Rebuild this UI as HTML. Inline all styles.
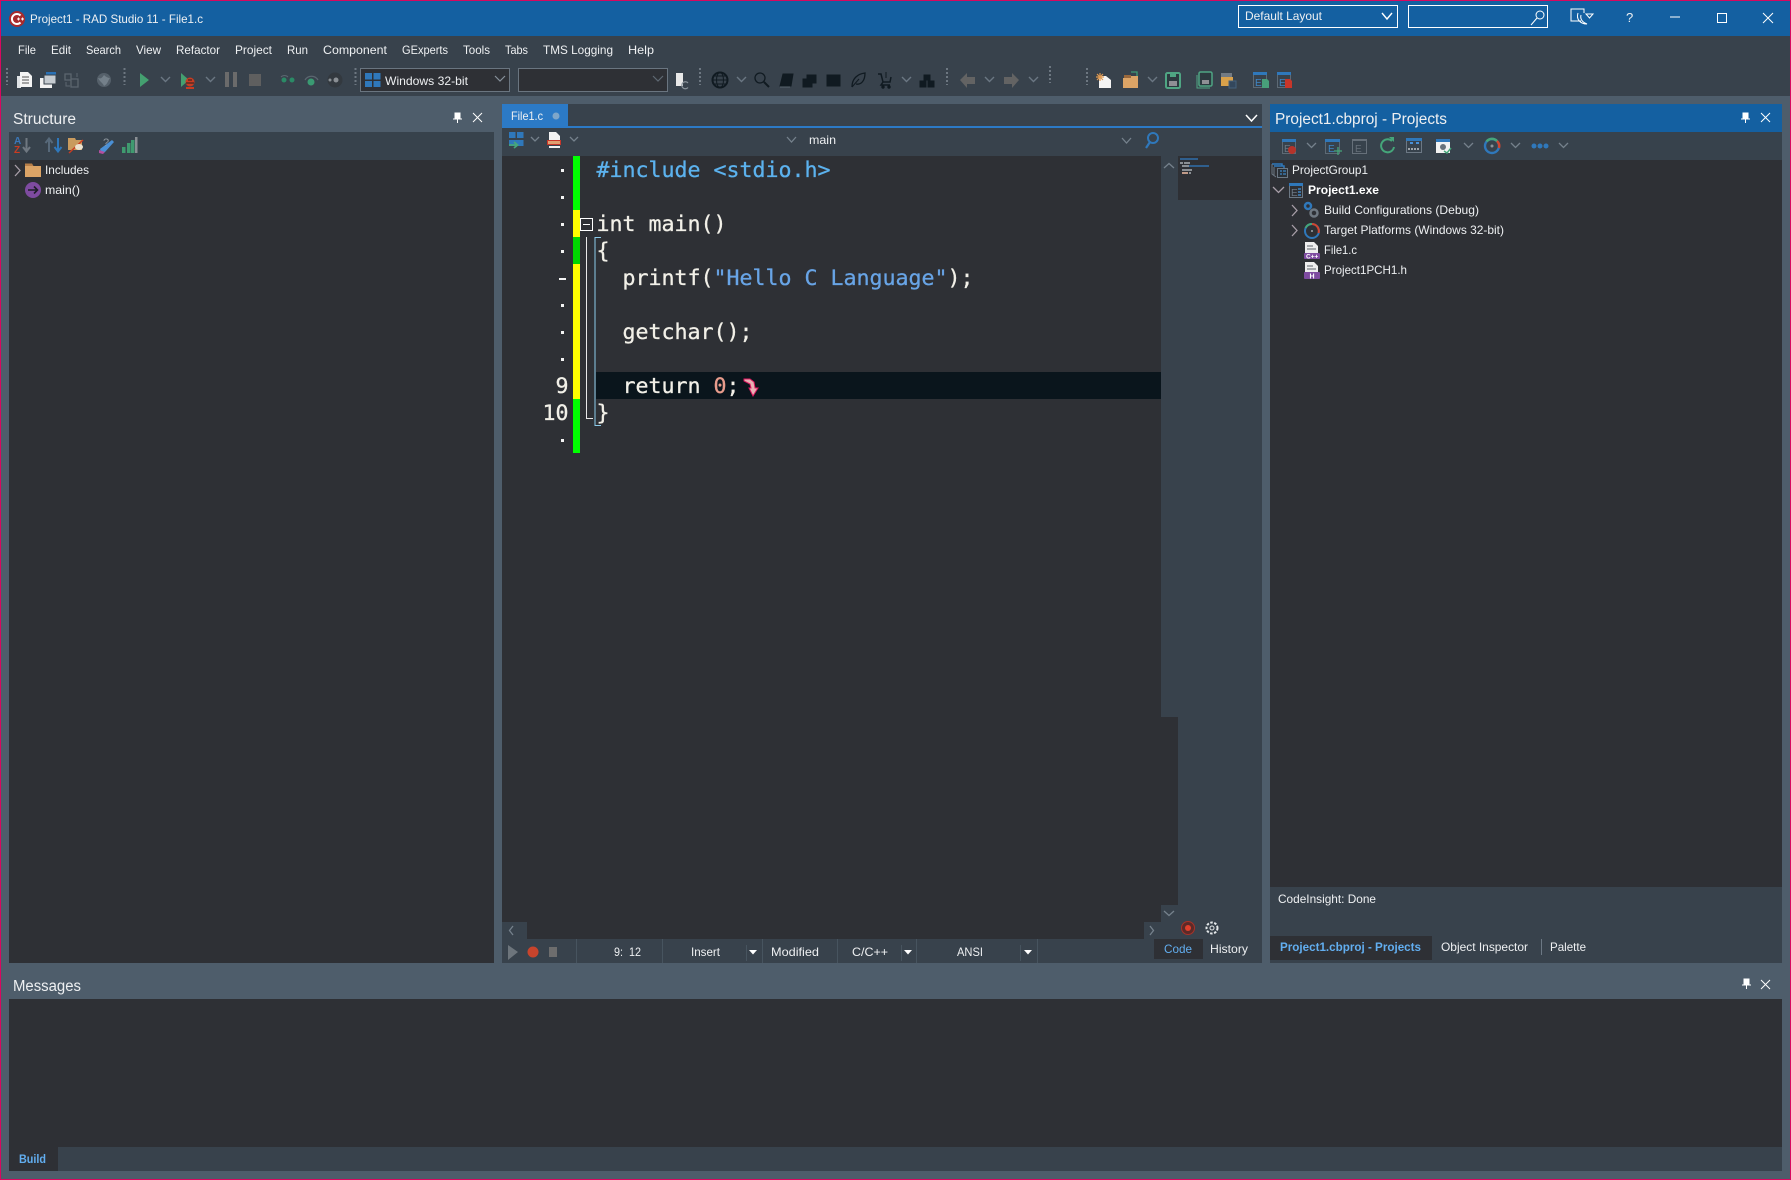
<!DOCTYPE html>
<html lang="en"><head><meta charset="utf-8"><title>Project1 - RAD Studio 11 - File1.c</title>
<style>
html,body{margin:0;padding:0;background:#4e5d6b;width:1791px;height:1180px;overflow:hidden}
svg{display:block}
text{font-family:"Liberation Sans",sans-serif;font-size:12px;fill:#eef0f2;white-space:pre}
.t{font-size:15.5px}
.c{font-family:"DejaVu Sans Mono","Liberation Mono",monospace;font-size:21.6px;fill:#f2f0e8;stroke:#f2f0e8;stroke-width:.3px}
.b{font-weight:bold}
</style></head><body>
<svg width="1791" height="1180" viewBox="0 0 1791 1180" xmlns="http://www.w3.org/2000/svg">
<!-- base -->
<rect width="1791" height="1180" fill="#4e5d6b"/>
<rect x="1" y="1" width="1789" height="35" fill="#1460a1"/>
<rect x="1" y="36" width="1789" height="60" fill="#38424c"/>
<!-- frame -->
<path d="M.5 1180V0M0 .5H1791M1790.5 0V1180M0 1179.5H1791" stroke="#d8085f" fill="none"/>

<!-- title bar -->
<circle cx="17" cy="19" r="8" fill="#a82a2c"/><path d="M20.500 15.500a5 5 0 1 0 0 7" fill="none" stroke="#fff" stroke-width="2"/><path d="M17 19h3M18.500 17.500v3M21 19h3M22.500 17.500v3" stroke="#fff" stroke-width=".9"/>
<text x="30" y="23" textLength="173" lengthAdjust="spacingAndGlyphs">Project1 - RAD Studio 11 - File1.c</text>
<rect x="1238.5" y="5.5" width="159" height="22" fill="none" stroke="#fff"/>
<text x="1245" y="20" textLength="77" lengthAdjust="spacingAndGlyphs">Default Layout</text>
<path d="M1382 13l5 6 5-6" fill="none" stroke="#fff" stroke-width="1.4"/>
<rect x="1408.5" y="5.5" width="139" height="22" fill="none" stroke="#fff"/>
<circle cx="1540" cy="15" r="4" fill="none" stroke="#fff"/><path d="M1537 18l-6 7" stroke="#fff"/>
<path d="M1581 21h-10v-12h13v4M1578 13c-2 6 2 11 9 11-5-2-7-5-6-9" fill="none" stroke="#fff"/><path d="M1586 14h7l-3.500 4z" fill="none" stroke="#fff"/>
<text x="1626" y="22" style="font-size:13px">?</text>
<path d="M1670 17h10" stroke="#fff"/>
<rect x="1717.5" y="13.500" width="9" height="9" fill="none" stroke="#fff"/>
<path d="M1763 13l10 10M1773 13l-10 10" stroke="#fff"/>

<!-- menu -->
<text x="18" y="54" textLength="18" lengthAdjust="spacingAndGlyphs">File</text>
<text x="51" y="54" textLength="20" lengthAdjust="spacingAndGlyphs">Edit</text>
<text x="86" y="54" textLength="35" lengthAdjust="spacingAndGlyphs">Search</text>
<text x="136" y="54" textLength="25" lengthAdjust="spacingAndGlyphs">View</text>
<text x="176" y="54" textLength="44" lengthAdjust="spacingAndGlyphs">Refactor</text>
<text x="235" y="54" textLength="37" lengthAdjust="spacingAndGlyphs">Project</text>
<text x="287" y="54" textLength="21" lengthAdjust="spacingAndGlyphs">Run</text>
<text x="323" y="54" textLength="64" lengthAdjust="spacingAndGlyphs">Component</text>
<text x="402" y="54" textLength="46" lengthAdjust="spacingAndGlyphs">GExperts</text>
<text x="463" y="54" textLength="27" lengthAdjust="spacingAndGlyphs">Tools</text>
<text x="505" y="54" textLength="23" lengthAdjust="spacingAndGlyphs">Tabs</text>
<text x="543" y="54" textLength="70" lengthAdjust="spacingAndGlyphs">TMS Logging</text>
<text x="628" y="54" textLength="26" lengthAdjust="spacingAndGlyphs">Help</text>

<!-- toolbar grips -->
<path d="M7 68v17M124.500 68v17M355.500 68v17M700 68v17M947 68v17M1050 66v17M1087 68v17" stroke="#6d7781" stroke-width="2" stroke-dasharray="2 2" fill="none"/>
<!-- toolbar chevrons -->
<path d="M161 77l4.500 4.500 4.500-4.500M206 77l4.500 4.500 4.500-4.500M737 77l4.500 4.500 4.500-4.500M902 77l4.500 4.500 4.500-4.500M985 77l4.500 4.500 4.500-4.500M1029 77l4.500 4.500 4.500-4.500M1148 77l4.500 4.500 4.500-4.500" fill="none" stroke="#6b7783" stroke-width="1.400"/>
<!-- new/open icons -->
<rect x="17" y="76" width="4" height="12" fill="#dfe3e6"/><path d="M20 72h8l4 4v11H20z" fill="#f4f4f4"/><path d="M22 77h7M22 80h7M22 83h7" stroke="#555"/>
<rect x="40" y="78" width="12" height="10" fill="#f2f2f2"/><rect x="46" y="72" width="10" height="3" fill="#2a71b5"/><rect x="44" y="75" width="12" height="9" fill="#c5cbd0" stroke="#38424c"/>
<path d="M65 74h6v6h-6zM71 79h7v8h-7z" fill="none" stroke="#5c666f" stroke-width="1.300"/><path d="M66 82v4h4M77 73v4" fill="none" stroke="#5c666f"/>
<circle cx="104" cy="80" r="7" fill="#55606a"/><path d="M98 78c3 1 4 0 6-3 2 2 4 3 6 3-2 2-2 6-6 8-1-3-4-4-6-8z" fill="#74808a"/>
<!-- run -->
<path d="M140 73l9 7-9 7z" fill="#44a070"/>
<path d="M181 73l8 7-8 7z" fill="#44a070"/><circle cx="190" cy="82" r="4.500" fill="#c93c22"/><path d="M186 87h8v2h-8z" fill="#c93c22"/><path d="M188 80h4M186 83h8" stroke="#222" stroke-width="1"/>
<rect x="225" y="72" width="4" height="15" fill="#6b6b6b"/><rect x="233" y="72" width="4" height="15" fill="#6b6b6b"/>
<rect x="249" y="74" width="12" height="12" fill="#5f5f5f"/>
<circle cx="284" cy="80" r="2.500" fill="#2b8a66"/><circle cx="292" cy="80" r="2.500" fill="#2b8a66"/><path d="M281 77c2-2 5-2 7 0" fill="none" stroke="#5b6670"/>
<circle cx="311" cy="82" r="3.500" fill="#3a9a72"/><path d="M305 80c3-5 10-5 13 0" fill="none" stroke="#5b6670" stroke-width="1.300"/>
<circle cx="335" cy="80" r="7.500" fill="#33393f"/><circle cx="336" cy="80" r="2.500" fill="#8a8f94"/><circle cx="330" cy="80" r="1.500" fill="#8a8f94"/>
<!-- platform combo -->
<rect x="360.500" y="68.500" width="149" height="23" fill="#2e3035" stroke="#6a7580"/>
<path d="M365 73h7v6.500h-7zM373.500 73h7v6.500h-7zM365 81h7v6h-7zM373.500 81h7v6h-7z" fill="#2f78bb"/>
<text x="385" y="85" textLength="83" lengthAdjust="spacingAndGlyphs">Windows 32-bit</text>
<path d="M495 76l5 5 5-5" fill="none" stroke="#87919b" stroke-width="1.200"/>
<rect x="518.500" y="68.500" width="149" height="23" fill="#2e3035" stroke="#6a7580"/>
<path d="M653 76l5 5 5-5" fill="none" stroke="#5f6973" stroke-width="1.200"/>
<path d="M676 73h7v13h-7z" fill="#e8e8e8"/><path d="M688 83a3.500 3.500 0 1 0 0 4.500" fill="none" stroke="#8a939b" stroke-width="1.200"/>
<!-- dark toolbar group -->
<g fill="#101a21" stroke="#101a21">
<circle cx="720" cy="80" r="7.500" fill="none" stroke-width="2"/><ellipse cx="720" cy="80" rx="3.500" ry="7.500" fill="none"/><path d="M712 80h16M713 76h14M713 84h14" fill="none"/>
<circle cx="760" cy="78" r="5" fill="none" stroke-width="1.300"/><path d="M764 82l5 5" fill="none" stroke-width="2"/>
<path d="M783 74h10l-2 12h-11z" stroke-width="1"/><path d="M780 87h10" stroke="#5a6670"/>
<path d="M807 75h9v8h-9zM803 79h9v8h-9z" stroke-width="1"/>
<path d="M827 75h13v11h-13z" stroke-width="1"/>
<path d="M852 87c0-8 5-13 13-14 0 8-4 12-9 11" fill="none" stroke-width="1.300"/><path d="M852 87l7-8" fill="none"/>
<path d="M878 74h3l2 8h7l1-5M883 82l-2 3h9" fill="none" stroke-width="1.500"/><circle cx="883" cy="87" r="1.200"/><circle cx="889" cy="87" r="1.200"/><path d="M886 72v6" fill="none"/>
<path d="M924 75h6v5h-6zM920 81h6v6h-6zM928 81h6v6h-6z" stroke-width="1"/>
</g>
<!-- nav -->
<path d="M960 80l7-7v4h8v7h-8v4z" fill="#636363"/><path d="M1019 80l-7-7v4h-8v7h8v4z" fill="#636363"/>
<!-- file icons -->
<path d="M1099 76h7l5 4v8h-12z" fill="#f4f4f4"/><path d="M1100 73v8M1096 77h8M1097 74l6 6M1103 74l-6 6" stroke="#e09a50" stroke-width="1.200"/>
<path d="M1123 78h6l2-2h7v12h-15z" fill="#dca466"/><rect x="1124" y="75" width="7" height="3" fill="#99683c"/><path d="M1131 72h6v4" fill="none" stroke="#3f9a76" stroke-width="1.300"/>
<rect x="1166" y="73" width="14" height="15" rx="1.500" fill="#2d3a40" stroke="#4fa583" stroke-width="2"/><rect x="1169" y="81" width="8" height="5" fill="#8f8f95"/><rect x="1170" y="73" width="6" height="4" fill="#4fa583"/>
<rect x="1199" y="72" width="13" height="14" rx="1.500" fill="#2d3a40" stroke="#4fa583" stroke-width="1.500"/><path d="M1197 75v13h13" fill="none" stroke="#4fa583"/><rect x="1202" y="80" width="7" height="4" fill="#8f8f95"/>
<rect x="1221" y="73" width="11" height="4" fill="#737b83"/><rect x="1221" y="77" width="12" height="9" fill="#d9a14a"/><rect x="1229" y="81" width="7" height="7" fill="#33475c" stroke="#45617c"/>
<rect x="1253.500" y="73.500" width="13" height="14" fill="none" stroke="#5d6a75"/><rect x="1253" y="72" width="14" height="3" fill="#2f78bb"/><text x="1255" y="86" style="font-size:10px;fill:#3f86c4">E</text><path d="M1262 79h5l2 2v7h-7z" fill="#48a07a"/>
<rect x="1277.500" y="73.500" width="13" height="14" fill="none" stroke="#5d6a75"/><rect x="1277" y="72" width="14" height="3" fill="#2f78bb"/><text x="1279" y="86" style="font-size:10px;fill:#3f86c4">E</text><path d="M1285 79h5l2 2v7h-7z" fill="#c8362a"/>

<!-- Structure panel -->
<text class="t" x="13" y="124" textLength="63" lengthAdjust="spacingAndGlyphs">Structure</text>
<path d="M455 113h5v5h-5zM453 119h9M457.500 119v4" fill="#fff" stroke="#fff"/>
<path d="M473 113l9 9M482 113l-9 9" stroke="#fff"/>
<rect x="9" y="132" width="485" height="28" fill="#37424c"/>
<rect x="9" y="160" width="485" height="803" fill="#2e3035"/>
<text x="14" y="144" class="b" style="font-size:10px;fill:#3c78b8">A</text>
<text x="14" y="153" class="b" style="font-size:10px;fill:#c93c22">Z</text>
<path d="M26.500 138v13M23 147l3.500 4.500 3.500-4.500" fill="none" stroke="#6f7881" stroke-width="2"/>
<path d="M49 152v-13M45.500 143l3.500-4.500 3.500 4.500" fill="none" stroke="#57697a" stroke-width="2"/>
<path d="M58 138v13M54.500 147l3.500 4.500 3.500-4.500" fill="none" stroke="#2f78bb" stroke-width="2"/>
<path d="M68 138h7l1 2h6v10H68z" fill="#c99b5e"/><path d="M69 153l14-13" stroke="#c93c22" stroke-width="1.500"/><ellipse cx="79" cy="147" rx="4" ry="3" fill="#ece3d0"/>
<path d="M100 149l12-9 2 2-9 10h-4z" fill="#4a90d6"/><path d="M99 150l6 2-2 2-4-1z" fill="#b24fa0"/><text x="103" y="146" style="font-size:11px;fill:#9098a0">?</text>
<rect x="122" y="147" width="3.500" height="6" fill="#3f9a6f"/><rect x="127" y="143" width="3.500" height="10" fill="#3f9a6f"/><rect x="131" y="140" width="3.500" height="13" fill="#3f9a6f"/><rect x="135" y="137" width="2.500" height="16" fill="#8a8f94"/>
<path d="M15 165l5 5.500-5 5.500" fill="none" stroke="#a89ea8" stroke-width="1.300"/>
<path d="M25 166v-2.500h7l1.500 2.500z" fill="#b77e48"/><rect x="25" y="166" width="16" height="11" fill="#dca466"/>
<text x="45" y="174" textLength="44" lengthAdjust="spacingAndGlyphs">Includes</text>
<circle cx="33" cy="190" r="8" fill="#7e4ba0"/><path d="M28 190h9M34 186.500l3.500 3.500-3.500 3.500" fill="none" stroke="#1e1e28" stroke-width="1.600"/>
<text x="45" y="194" textLength="35" lengthAdjust="spacingAndGlyphs">main()</text>

<!-- Editor -->
<rect x="502" y="104" width="760" height="859" fill="#38424c"/>
<rect x="502" y="104" width="66" height="22" fill="#2c7ac6"/>
<rect x="502" y="126" width="760" height="2" fill="#2c7ac6"/>
<text x="511" y="120" textLength="32" lengthAdjust="spacingAndGlyphs">File1.c</text>
<circle cx="556" cy="116" r="3.500" fill="#7fa6c9"/>
<path d="M1246 115l5.500 6 5.500-6" fill="none" stroke="#fff" stroke-width="1.500"/>
<!-- editor toolbar -->
<path d="M509 132h6.500v6h-6.500zM517 132h6.500v6h-6.500zM509 140h14.500v6h-14.500z" fill="#2f78bb"/><path d="M509 145h8M514 142l3.500 3-3.500 3" fill="none" stroke="#46a67a" stroke-width="1.800"/>
<path d="M531 137l4 4 4-4M570 137l4 4 4-4M787 137l4.500 5 4.500-5M1122 138l4.500 5 4.500-5" fill="none" stroke="#75818c" stroke-width="1.300"/>
<path d="M549 132h7l4 4v5h-11z" fill="#f2f2f2"/><rect x="547.500" y="140.500" width="13" height="4" fill="#e0a070" stroke="#c8362a"/><rect x="549" y="146" width="11" height="2" fill="#f2f2f2"/>
<text x="809" y="144" textLength="27" lengthAdjust="spacingAndGlyphs">main</text>
<circle cx="1153" cy="138" r="5" fill="none" stroke="#2f78bb" stroke-width="2"/><path d="M1150 142l-4 6" stroke="#2f78bb" stroke-width="2.200"/>
<!-- code area -->
<path d="M502 156H1161V717H1178V905H1161V922H1144V939H527V922H502z" fill="#2e3035"/>
<rect x="1178" y="156" width="84" height="44" fill="#2e3035"/>
<!-- minimap -->
<rect x="1180" y="158" width="18" height="2" fill="#2f5f8e"/><rect x="1180" y="162" width="3" height="2" fill="#8a8f94"/><rect x="1184" y="162" width="6" height="2" fill="#8a8f94"/><rect x="1182" y="165" width="9" height="2" fill="#8a8f94"/><rect x="1189" y="165" width="20" height="2" fill="#2f5f8e"/><rect x="1182" y="169" width="10" height="2" fill="#8a8f94"/><rect x="1182" y="172" width="6" height="2" fill="#c09a88"/><rect x="1189" y="172" width="2" height="2" fill="#8a8f94"/>
<!-- scroll arrows -->
<path d="M1164 168l5-4.500 5 4.500M1164 911l5 4.500 5-4.500" fill="none" stroke="#75818c" stroke-width="1.300"/>
<path d="M513 926l-3.500 4.500 3.500 4.500M1150 926l3.500 4.500-3.500 4.500" fill="none" stroke="#75818c" stroke-width="1.300"/>
<!-- change bars -->
<rect x="573" y="156" width="7" height="54" fill="#00ff00"/><rect x="573" y="210" width="7" height="27" fill="#ffff00"/><rect x="573" y="237" width="7" height="27" fill="#00d800"/><rect x="573" y="264" width="7" height="135" fill="#ffff00"/><rect x="573" y="399" width="7" height="54" fill="#00ff00"/>
<!-- line gutter -->
<g fill="#f4f4f4"><rect x="561" y="169" width="3" height="3"/><rect x="561" y="196" width="3" height="3"/><rect x="561" y="223" width="3" height="3"/><rect x="561" y="250" width="3" height="3"/><rect x="559" y="278" width="7" height="2"/><rect x="561" y="304" width="3" height="3"/><rect x="561" y="331" width="3" height="3"/><rect x="561" y="358" width="3" height="3"/><rect x="561" y="439" width="3" height="3"/></g>
<text class="c" x="555.500" y="393">9</text>
<text class="c" x="542.500" y="420">10</text>
<!-- active line -->
<rect x="596" y="372" width="565" height="27" fill="#0a151c"/>
<!-- folds -->
<rect x="580.500" y="218.500" width="12" height="12" fill="none" stroke="#fff"/><path d="M583 224.500h7" stroke="#fff"/>
<path d="M586.500 237V418.500H593" fill="none" stroke="#e8e8e8"/>
<path d="M601 237.500H595V425.500H601" fill="none" stroke="#8ccbea"/>
<!-- code -->
<text class="c" x="596.500" y="177" style="fill:#5cb2ee;stroke:#5cb2ee">#include &lt;stdio.h&gt;</text>
<text class="c" x="596.500" y="231">int main()</text>
<text class="c" x="596.500" y="258">{</text>
<text class="c" x="622.500" y="285">printf(</text>
<text class="c" x="713.500" y="285" style="fill:#68a4e6;stroke:#68a4e6">"Hello C Language"</text>
<text class="c" x="947.500" y="285">);</text>
<text class="c" x="622.500" y="339">getchar();</text>
<text class="c" x="622.500" y="393">return </text>
<text class="c" x="713.500" y="393" style="fill:#e89c8c;stroke:#e89c8c">0</text>
<text class="c" x="726.500" y="393">;</text>
<text class="c" x="596.500" y="420">}</text>
<!-- cursor -->
<path d="M744 379h6l4 3 1 6h3l-5 8-4-8h2l-1-4-6-3z" fill="#e8b0b4" stroke="#e01860" stroke-width="1"/>
<!-- target / gear -->
<circle cx="1188" cy="928" r="6.500" fill="#5c2a28" stroke="#a83228"/><circle cx="1188" cy="928" r="3" fill="#e0402c"/>
<circle cx="1212" cy="928" r="5.500" fill="none" stroke="#e4e8ea" stroke-width="2" stroke-dasharray="2.500 1.500"/><circle cx="1212" cy="928" r="2" fill="none" stroke="#e4e8ea"/>
<!-- status -->
<path d="M576.500 939v24M662.500 939v24M762.500 939v24M837.500 939v24M916.500 939v24M1037.500 939v24M746.500 945v16M901.500 945v16M1020.500 945v16" stroke="#47545f" fill="none"/>
<path d="M508 945l10 7-10 8z" fill="#6d757c"/><circle cx="533" cy="952" r="5.500" fill="#c8442c"/><rect x="549" y="947" width="8" height="10" fill="#6d6d6d"/>
<text x="614" y="956" textLength="27" lengthAdjust="spacingAndGlyphs">9:  12</text>
<text x="691" y="956" textLength="29" lengthAdjust="spacingAndGlyphs">Insert</text>
<text x="771" y="956" textLength="48" lengthAdjust="spacingAndGlyphs">Modified</text>
<text x="852" y="956" textLength="36" lengthAdjust="spacingAndGlyphs">C/C++</text>
<text x="957" y="956" textLength="26" lengthAdjust="spacingAndGlyphs">ANSI</text>
<path d="M749 950h8l-4 4.500zM904 950h8l-4 4.500zM1024 950h8l-4 4.500z" fill="#fff"/>
<rect x="1154" y="939" width="49" height="20" fill="#2e3035"/>
<text x="1164" y="953" textLength="28" lengthAdjust="spacingAndGlyphs" style="fill:#62aef0">Code</text>
<text x="1210" y="953" textLength="38" lengthAdjust="spacingAndGlyphs">History</text>

<!-- Projects panel -->
<rect x="1270" y="104" width="512" height="28" fill="#1460a1"/>
<rect x="1270" y="132" width="512" height="28" fill="#37424c"/>
<rect x="1270" y="160" width="512" height="727" fill="#2e3035"/>
<rect x="1270" y="887" width="512" height="76" fill="#38424c"/>
<text class="t" x="1275" y="124" textLength="172" lengthAdjust="spacingAndGlyphs">Project1.cbproj - Projects</text>
<path d="M1743 113h5v5h-5zM1741 119h9M1745.500 119v4" fill="#fff" stroke="#fff"/>
<path d="M1761 113l9 9M1770 113l-9 9" stroke="#fff"/>
<!-- projects toolbar -->
<rect x="1282.500" y="140.500" width="13" height="13" fill="none" stroke="#5d6a75"/><rect x="1282" y="139" width="14" height="3" fill="#2f78bb"/><text x="1284" y="152" style="font-size:10px;fill:#6c7884">E</text><circle cx="1292" cy="150" r="4" fill="#b5332a"/>
<rect x="1325.500" y="140.500" width="14" height="13" fill="none" stroke="#5d6a75"/><rect x="1325" y="139" width="15" height="3" fill="#2f78bb"/><text x="1328" y="152" style="font-size:10px;fill:#3f86c4">E</text><path d="M1334 151h8M1338 147v8" stroke="#45a67a" stroke-width="1.300"/>
<rect x="1352.500" y="140.500" width="14" height="13" fill="none" stroke="#66707a"/><rect x="1352" y="139" width="15" height="2" fill="#66707a"/><text x="1355" y="152" style="font-size:10px;fill:#66707a">E</text>
<path d="M1392 141a6.500 6.500 0 1 0 2 6" fill="none" stroke="#45a67a" stroke-width="2"/><path d="M1389 137l5 0v5z" fill="#45a67a"/>
<rect x="1406.500" y="138.500" width="15" height="14" fill="none" stroke="#6c7884"/><rect x="1406" y="138" width="16" height="3" fill="#2f78bb"/><path d="M1410 143h3M1416 143h3" stroke="#4a90d6" stroke-width="2"/><path d="M1408 149h12" stroke="#a0a6ab" stroke-dasharray="2 1" stroke-width="2"/>
<rect x="1436" y="139" width="14" height="3" fill="#2f78bb"/><rect x="1436" y="142" width="14" height="11" fill="#f2f2f2"/><circle cx="1443" cy="147" r="3" fill="#68727b"/><path d="M1444 151l3 2 4-5" fill="none" stroke="#45a67a" stroke-width="1.500"/>
<circle cx="1492" cy="146" r="7" fill="none" stroke="#2f78bb" stroke-width="2.400"/><path d="M1486.500 141.500a7 7 0 0 1 10.500-.5" fill="none" stroke="#45a67a" stroke-width="2.400"/><path d="M1497 141a7 7 0 0 1 2 7" fill="none" stroke="#d2452f" stroke-width="2.400"/><circle cx="1492" cy="146" r="1.500" fill="#8a9299"/>
<circle cx="1534" cy="146" r="2.500" fill="#2f78bb"/><circle cx="1540" cy="146" r="2.500" fill="#2f78bb"/><circle cx="1546" cy="146" r="2.500" fill="#2f78bb"/>
<path d="M1307 143l4.500 4.500 4.500-4.500M1464 143l4.500 4.500 4.500-4.500M1511 143l4.500 4.500 4.500-4.500M1559 143l4.500 4.500 4.500-4.500" fill="none" stroke="#75818c" stroke-width="1.300"/>
<!-- project tree -->
<path d="M1272 164h10v2M1274 166h10v2" fill="none" stroke="#2f78bb" stroke-width="1.500"/><path d="M1272 164v10l4 3M1274 167v9" fill="none" stroke="#6c7884"/><rect x="1277.500" y="168.500" width="10" height="9" fill="#2a3138" stroke="#6c7884"/><path d="M1280 171h2M1283 171h3M1280 174h2M1283 174h3" stroke="#3f86c4" stroke-width="1.300"/>
<text x="1292" y="174" textLength="76" lengthAdjust="spacingAndGlyphs">ProjectGroup1</text>
<path d="M1273 187l5.500 5.500 5.500-5.500" fill="none" stroke="#a89ea8" stroke-width="1.300"/>
<rect x="1289.500" y="184.500" width="13" height="13" fill="none" stroke="#6c7884"/><rect x="1289" y="183" width="14" height="3" fill="#2f78bb"/><text x="1291" y="196" style="font-size:10px;fill:#6c7884">E</text><path d="M1298 189h3M1298 192h3M1298 195h3" stroke="#3f86c4" stroke-width="1.500"/>
<text class="b" x="1308" y="194" textLength="71" lengthAdjust="spacingAndGlyphs" style="fill:#fff">Project1.exe</text>
<path d="M1292 205l5 5.500-5 5.500M1292 225l5 5.500-5 5.500" fill="none" stroke="#a89ea8" stroke-width="1.300"/>
<circle cx="1308" cy="206" r="3" fill="none" stroke="#2f78bb" stroke-width="2.500"/><circle cx="1314" cy="213" r="3.500" fill="none" stroke="#6f7881" stroke-width="2.500"/>
<text x="1324" y="214" textLength="155" lengthAdjust="spacingAndGlyphs">Build Configurations (Debug)</text>
<circle cx="1312" cy="231" r="7" fill="none" stroke="#2f78bb" stroke-width="2"/><path d="M1305.500 228a7 7 0 0 1 6.500-4" fill="none" stroke="#45a67a" stroke-width="2"/><path d="M1312 224a7 7 0 0 1 6.500 9" fill="none" stroke="#d2452f" stroke-width="2"/><circle cx="1312" cy="231" r="1" fill="#a0a6ab"/>
<text x="1324" y="234" textLength="180" lengthAdjust="spacingAndGlyphs">Target Platforms (Windows 32-bit)</text>
<path d="M1305 242h9l4 4v7h-13z" fill="#eeeeee"/><path d="M1307 246h6M1307 249h9" stroke="#5c6269"/><rect x="1304" y="253" width="16" height="6" rx="1" fill="#7e4ba0"/><text x="1306" y="258.500" class="b" style="font-size:6.500px;fill:#fff">C++</text>
<text x="1324" y="254" textLength="33" lengthAdjust="spacingAndGlyphs">File1.c</text>
<path d="M1305 262h9l4 4v7h-13z" fill="#eeeeee"/><path d="M1307 266h6M1307 269h9" stroke="#5c6269"/><rect x="1304" y="272" width="16" height="7" rx="1" fill="#7e4ba0"/><text x="1309.500" y="278.500" class="b" style="font-size:7px;fill:#fff">H</text>
<text x="1324" y="274" textLength="83" lengthAdjust="spacingAndGlyphs">Project1PCH1.h</text>
<!-- projects bottom -->
<text x="1278" y="903" textLength="98" lengthAdjust="spacingAndGlyphs">CodeInsight: Done</text>
<rect x="1270" y="936" width="162" height="24" fill="#2e3035"/>
<text class="b" x="1280" y="951" textLength="141" lengthAdjust="spacingAndGlyphs" style="fill:#62aef0">Project1.cbproj - Projects</text>
<text x="1441" y="951" textLength="87" lengthAdjust="spacingAndGlyphs">Object Inspector</text>
<path d="M1541.500 939v16" stroke="#6c7884"/>
<text x="1550" y="951" textLength="36" lengthAdjust="spacingAndGlyphs">Palette</text>

<!-- Messages -->
<text class="t" x="13" y="991" textLength="68" lengthAdjust="spacingAndGlyphs">Messages</text>
<path d="M1744 979h5v5h-5zM1742 985h9M1746.500 985v4" fill="#fff" stroke="#fff"/>
<path d="M1761 980l9 9M1770 980l-9 9" stroke="#fff"/>
<rect x="9" y="999" width="1773" height="148" fill="#2e3035"/>
<rect x="9" y="1147" width="1773" height="24" fill="#38424c"/>
<rect x="9" y="1147" width="49" height="24" fill="#2e3035"/>
<text class="b" x="19" y="1163" textLength="27" lengthAdjust="spacingAndGlyphs" style="fill:#62aef0">Build</text>
</svg>
</body></html>
